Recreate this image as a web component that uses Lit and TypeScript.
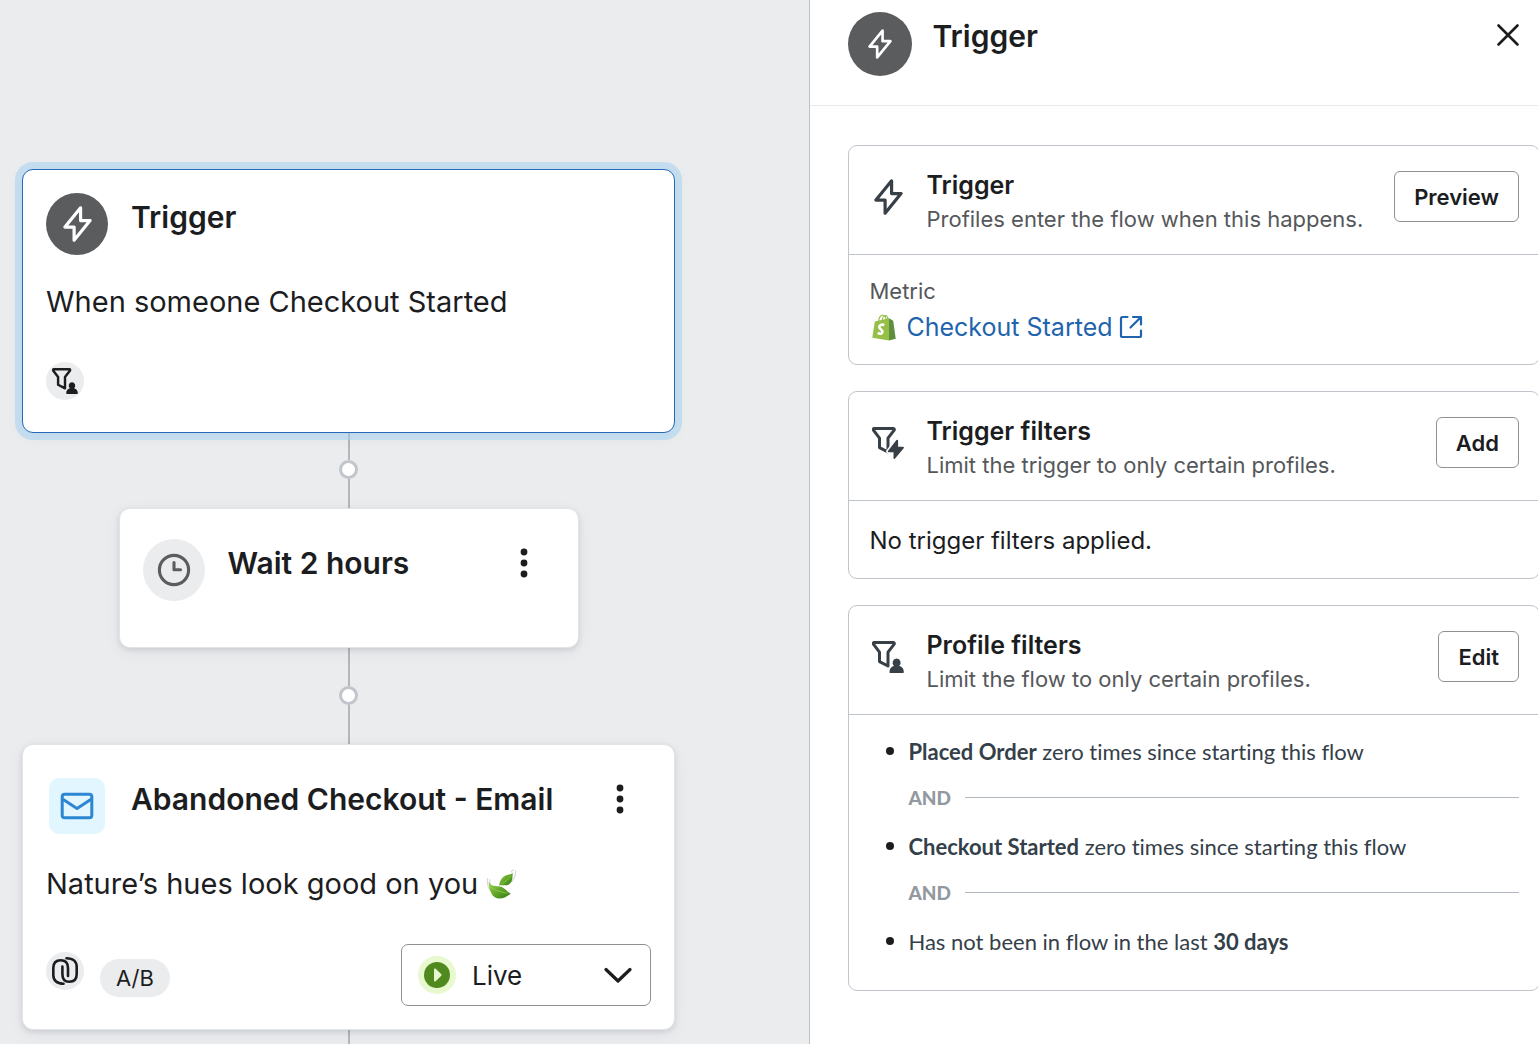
import { LitElement, html, css, svg, nothing, type TemplateResult } from 'lit';
import { customElement, property } from 'lit/decorators.js';

const bolt = html`<svg class="bolt" viewBox="0 0 28 35" fill="none" stroke="currentColor" stroke-width="3.1" stroke-linejoin="round" aria-hidden="true"><path d="M17 1.8 1.8 20.5h8.9v12.7L26.2 14.2H17Z"/></svg>`;

const funnelFrame = (mark: TemplateResult) => html`<svg class="funnel" viewBox="0 0 32 32" aria-hidden="true">
  <path d="M2.2 1.6H21.4C22.4 1.6 22.6 2.6 22 3.4L16 11.2V25L7.5 20.6V11.2L1.6 3.4C1 2.6 1.2 1.6 2.2 1.6Z" fill="none" stroke="currentColor" stroke-width="3" stroke-linejoin="round"/>
  ${mark}
</svg>`;

const funnelPerson = funnelFrame(svg`
  <path d="M24.6 17.6a4.1 4.1 0 0 0-2.6 7.2c-3 .9-4.5 3-4.5 6.2 0 .7.3 1 1 1h12.3c.7 0 1-.3 1-1 0-3.2-1.6-5.3-4.6-6.2a4.1 4.1 0 0 0-2.6-7.2Z" fill="currentColor" stroke="var(--icon-ground, #fff)" stroke-width="2.2" paint-order="stroke"/>`);

const funnelBolt = funnelFrame(svg`
  <path d="M25.2 13.6 16.8 24.4h5.6V31L31 20.6h-5.8Z" fill="currentColor" stroke="var(--icon-ground, #fff)" stroke-width="5" stroke-linejoin="round"/>
  <path d="M25.2 13.6 16.8 24.4h5.6V31L31 20.6h-5.8Z" fill="currentColor" stroke="currentColor" stroke-width="1.8" stroke-linejoin="round"/>`);

const clock = html`<svg width="34" height="34" viewBox="0 0 34 34" fill="none" stroke="currentColor" stroke-width="3.1" stroke-linecap="round" stroke-linejoin="round" aria-hidden="true"><circle cx="17" cy="17" r="14.6"/><path d="M17 9.5v7.3h6.5"/></svg>`;

const envelope = html`<svg width="34" height="28" viewBox="0 0 34 28" fill="none" stroke="currentColor" stroke-width="3" stroke-linejoin="round" aria-hidden="true"><rect x="2.2" y="2.2" width="29.6" height="23.6" rx="2.5"/><path d="m2.5 7 14.5 9.5L31.5 7"/></svg>`;

const loops = html`<svg width="26" height="28" viewBox="0 0 26 28" fill="none" stroke="currentColor" stroke-width="2.6" stroke-linecap="round" role="img" aria-label="Smart sending"><path d="M11.5 26.7C4.5 26.7 1.3 23 1.3 18V11C1.3 6 4 3.2 8.7 3.2S16 6 16 11v8"/><path d="M14.5 1.3C21.5 1.3 24.7 5 24.7 10v7c0 5-2.7 7.8-7.4 7.8S10.4 22 10.4 17V9.5"/></svg>`;

const kebab = html`<svg width="8" height="30" viewBox="0 0 8 30" fill="currentColor" aria-hidden="true"><circle cx="4" cy="4" r="3.4"/><circle cx="4" cy="15" r="3.4"/><circle cx="4" cy="26" r="3.4"/></svg>`;

const leaves = html`<svg class="leaves" viewBox="0 0 32 32" role="img" aria-label="Leaves fluttering in wind">
  <defs><linearGradient id="leaf" x1="0" y1="0" x2="1" y2="1"><stop offset="0" stop-color="#9fd84a"/><stop offset=".5" stop-color="#62a829"/><stop offset="1" stop-color="#357a12"/></linearGradient></defs>
  <g fill="none" stroke="#d6d8da" stroke-width="1.2" stroke-linecap="round"><path d="M1.5 10c-.5 5 .5 9 3 12.5"/><path d="M4 11c-.5 2 0 4 .5 5"/><path d="M30.5 2c.3 5-1 8-4 11"/><path d="M28.5 1c-1 .5-2 1-2.5 2"/></g>
  <path d="M2.6 13C3.5 24 7 30.5 13.5 30.5 19 30.4 22 28 25.5 25.5 21 23.3 19 17.8 12.5 17.8 8.5 17.8 5 17.5 2.6 13Z" fill="url(#leaf)"/>
  <path d="M27.8 3.5C26 6.5 19.5 5.5 16.5 9.5 14.5 12 14.2 14.5 13.6 16.8 18 16.2 22.5 18.5 25.5 14.3 28 10.7 27 7 27.8 3.5Z" fill="url(#leaf)"/>
  <path d="M4.5 18c5 4.5 11 6 18 7M26 7c-3 3-5 6-10 8.5" fill="none" stroke="#a9d96a" stroke-width=".6"/>
</svg>`;

const bag = html`<svg width="24" height="27" viewBox="0 0 24 27" aria-hidden="true">
  <path d="M6.5 7.5C7 3.5 9 1 11.3 1.2c2 .1 2.7 2.3 2.8 5M10 7C10.3 4 11.5 2 13.5 1.5c1.6 0 2.3 2 2.6 4" fill="none" stroke="#95bf47" stroke-width="1.2"/>
  <path d="M2.8 7.5 17 4.2V26.5L.3 23.7Z" fill="#95bf47"/>
  <path d="m17 4.2 4.2 2.5 2.5 18L17 26.5Z" fill="#5e8e3e"/>
  <path d="M12.3 11.2c-2.6-1.3-5-.2-5 1.9 0 2.3 3.3 2.4 3.2 4.7-.1 2-2.5 2.6-4.7.9" fill="none" stroke="#fff" stroke-width="2.6"/>
</svg>`;

const external = html`<svg width="24" height="24" viewBox="0 0 24 24" fill="none" stroke="currentColor" stroke-width="2.2" stroke-linecap="round" stroke-linejoin="round" aria-hidden="true"><path d="M8.5 2H3.5A1.5 1.5 0 0 0 2 3.5v17A1.5 1.5 0 0 0 3.5 22h17a1.5 1.5 0 0 0 1.5-1.5V15.5M14 2h8v7.5M21.5 2.5 11.5 12.5"/></svg>`;

const cross = html`<svg width="24" height="24" viewBox="0 0 24 24" fill="none" stroke="currentColor" stroke-width="2.6" stroke-linecap="round" aria-hidden="true"><path d="m2.5 2.5 19 19M21.5 2.5l-19 19"/></svg>`;

const reset = css`
  * { box-sizing: border-box; }
  h1, h2, h3, p, ul { margin: 0; padding: 0; }
  button { font: inherit; color: inherit; cursor: pointer; padding: 0; border: 0; background: none; }
  svg { display: block; flex: none; }
`;

/** A step of the flow: icon, title, optional overflow menu and body. */
@customElement('flow-node')
export class FlowNode extends LitElement {
  static styles = [reset, css`
    :host { display: block; width: 653px; position: relative; }
    :host([size='compact']) { width: 460px; }
    .card { background: #fff; border: 1px solid #e2e4e7; border-radius: 11px; padding: 30px 23px 23px; box-shadow: 0 2px 5px rgba(40, 50, 65, .12), 0 4px 16px rgba(40, 50, 65, .06); }
    .card.selected { border-color: #2569b8; padding: 23px 23px 32px; box-shadow: 0 0 0 7px rgba(159, 210, 242, .5), 0 2px 16px rgba(40, 50, 65, .08); }
    .card.compact { padding-bottom: 46px; }
    .head { display: flex; align-items: flex-start; height: 62px; }
    .icon { width: 62px; height: 62px; display: grid; place-items: center; border-radius: 50%; background: #ebecee; color: #5b5c5e; }
    .icon.dark { background: #5b5c5e; color: #fff; }
    .icon.mail { width: 56px; height: 56px; margin: 3px; border-radius: 10px; background: #e1f6ff; color: #2e86d3; }
    h2 { flex: 1; margin-left: 23px; font-size: 30px; line-height: 49px; font-weight: 600; white-space: nowrap; }
    .menu { width: 62px; height: 48px; display: grid; place-items: center; }
    .bolt { width: 29px; height: 36px; }
  `];
  @property() heading = '';
  @property() icon = '';
  @property({ type: Boolean }) selected = false;
  @property({ type: Boolean }) menu = false;
  @property({ reflect: true }) size = '';
  render() {
    const look = this.icon === 'bolt' ? 'dark' : this.icon === 'mail' ? 'mail' : '';
    const glyph = this.icon === 'bolt' ? bolt : this.icon === 'mail' ? envelope : clock;
    return html`<article class="card ${this.selected ? 'selected' : ''} ${this.size}">
      <div class="head">
        <span class="icon ${look}">${glyph}</span>
        <h2>${this.heading}</h2>
        ${this.menu ? html`<button class="menu" type="button" aria-label="Options for ${this.heading}">${kebab}</button>` : nothing}
      </div>
      <slot></slot>
    </article>`;
  }
}

/** A bordered section of the side panel with a header action. */
@customElement('detail-card')
export class DetailCard extends LitElement {
  static styles = [reset, css`
    :host { display: block; }
    .card { border: 1px solid #c0c5cb; border-radius: 9px; }
    .head { display: flex; gap: 20px; height: 109px; padding: 22px 20px 0 21px; border-bottom: 1px solid #c0c5cb; }
    .icon { width: 36px; height: 51px; margin-top: 3px; display: grid; place-items: center; color: #373f47; }
    .text { flex: 1; min-width: 0; white-space: nowrap; }
    h2 { font-size: 25px; line-height: 34px; font-weight: 600; color: #1c1d1f; }
    p { font-size: 22px; line-height: 34px; color: #55585b; }
    .action { height: 51px; margin-top: 3px; padding: 0 19px; border: 1px solid #8e9092; border-radius: 6px; font-size: 22px; font-weight: 600; }
    .bolt { width: 29px; height: 36px; }
    .funnel { width: 32px; height: 32px; }
  `];
  @property() heading = '';
  @property() note = '';
  @property() icon = '';
  @property() action = '';
  render() {
    return html`<section class="card">
      <header class="head">
        <span class="icon">${this.icon === 'bolt' ? bolt : this.icon === 'funnel-bolt' ? funnelBolt : funnelPerson}</span>
        <div class="text"><h2>${this.heading}</h2><p>${this.note}</p></div>
        <button class="action" type="button">${this.action}</button>
      </header>
      <slot></slot>
    </section>`;
  }
}

@customElement('app-root')
export class AppRoot extends LitElement {
  static styles = [reset, css`
    :host { display: grid; grid-template-columns: 10fr 9fr; min-height: 100vh; overflow: hidden; background: #ebecee; color: #1c1d1f; font-family: Inter, "Liberation Sans", sans-serif; }
    .canvas { display: flex; flex-direction: column; align-items: center; width: 653px; margin-left: 22px; padding-top: 169px; }
    .link { display: flex; flex-direction: column; align-items: center; }
    .link::before, .link::after { content: ''; width: 2px; background: #b4b6ba; }
    .link::before { height: 27px; }
    .link::after { height: 29px; }
    .link.long::before { height: 38px; }
    .link.long::after { height: 39px; }
    .stop { width: 19px; height: 19px; border: 3px solid #c1c6cc; border-radius: 50%; background: #fff; }
    .tail { flex: 1; width: 2px; min-height: 14px; background: #b4b6ba; }
    .copy { display: flex; align-items: center; gap: 8px; margin-top: 29px; font-size: 29px; line-height: 36px; white-space: nowrap; }
    .leaves { width: 31px; height: 31px; }
    .badge { display: grid; place-items: center; width: 38px; height: 38px; border-radius: 50%; background: #ebecee; --icon-ground: #ebecee; }
    .badge .funnel { width: 26px; height: 26px; }
    .solo { margin-top: 42px; }
    .foot { display: flex; align-items: flex-start; gap: 16px; margin-top: 42px; }
    .foot .badge { margin-top: 8px; }
    .pill { height: 38px; margin-top: 15px; padding: 0 16px; border-radius: 19px; background: #ebecee; font-size: 22px; line-height: 38px; }
    .status { position: relative; width: 250px; height: 62px; margin-left: auto; }
    .status select { appearance: none; width: 100%; height: 100%; padding: 0 60px 0 70px; border: 1px solid #8e9092; border-radius: 7px; background: #fff; color: inherit; font: 400 26px Inter, "Liberation Sans", sans-serif; }
    .live { position: absolute; left: 17px; top: 12px; pointer-events: none; }
    .caret { position: absolute; right: 19px; top: 23px; pointer-events: none; }

    .panel { min-width: 0; background: #fff; border-left: 1px solid #c0c3c6; }
    .top { display: flex; align-items: flex-start; height: 106px; padding: 12px 10px 0 38px; border-bottom: 1px solid #e8e9ea; }
    .avatar { display: grid; place-items: center; width: 64px; height: 64px; border-radius: 50%; background: #5b5c5e; color: #fff; }
    .avatar .bolt { width: 24px; height: 30px; }
    .top h1 { flex: 1; margin-left: 20px; font-size: 30px; line-height: 48px; font-weight: 600; }
    .close { display: grid; place-items: center; width: 40px; height: 46px; }
    .sections { display: flex; flex-direction: column; gap: 26px; margin-right: -2px; padding: 39px 0 39px 38px; }
    .metric { padding: 18px 20px 19px; }
    .label { font-size: 22px; line-height: 36px; color: #55585b; }
    .metric a { display: inline-flex; align-items: center; height: 36px; padding-left: 3px; font-size: 25px; color: #1f64ad; text-decoration: none; white-space: nowrap; }
    .metric a span { margin: 0 6px 0 10px; }
    .empty { padding: 22px 20px 19px; font-size: 24px; line-height: 36px; }
    .rules { padding: 11px 20px 24px; list-style: none; font-family: Lato, "Liberation Sans", sans-serif; font-size: 22px; font-variant-ligatures: none; color: #344049; }
    .rule { display: flex; align-items: center; gap: 14px; height: 50px; padding-left: 17px; white-space: nowrap; }
    .rule::before { content: ''; width: 8px; height: 8px; border-radius: 50%; background: #1c1d1f; }
    .rule b { font-weight: 700; }
    .and { display: flex; align-items: center; gap: 14px; height: 45px; padding: 0 0 2px 39px; font-size: 19px; font-weight: 900; color: #9299a1; }
    .and::after { content: ''; flex: 1; height: 1px; background: #b0b7bf; }
  `];

  render() {
    return html`
      <main class="canvas">
        <flow-node heading="Trigger" icon="bolt" selected>
          <p class="copy">When someone Checkout Started</p>
          <div class="badge solo">${funnelPerson}</div>
        </flow-node>
        <div class="link"><span class="stop"></span></div>
        <flow-node heading="Wait 2 hours" icon="clock" size="compact" menu></flow-node>
        <div class="link long"><span class="stop"></span></div>
        <flow-node heading="Abandoned Checkout - Email" icon="mail" menu>
          <p class="copy">Nature’s hues look good on you ${leaves}</p>
          <div class="foot">
            <span class="badge">${loops}</span>
            <span class="pill">A/B</span>
            <div class="status">
              <select aria-label="Status"><option>Live</option></select>
              <svg class="live" width="38" height="38" viewBox="0 0 38 38" aria-hidden="true"><circle cx="19" cy="19" r="19" fill="#e8f8cf"/><circle cx="19" cy="19" r="13" fill="#508a1e"/><path d="M17 13.5 22.6 19 17 24.5Z" fill="#e8f8cf" stroke="#e8f8cf" stroke-width="2" stroke-linejoin="round"/></svg>
              <svg class="caret" width="28" height="17" viewBox="0 0 28 17" fill="none" stroke="currentColor" stroke-width="3.2" stroke-linecap="round" stroke-linejoin="round" aria-hidden="true"><path d="m2 2.5 12 11.5L26 2.5"/></svg>
            </div>
          </div>
        </flow-node>
        <div class="tail"></div>
      </main>
      <aside class="panel">
        <header class="top">
          <span class="avatar">${bolt}</span>
          <h1>Trigger</h1>
          <button class="close" type="button" aria-label="Close">${cross}</button>
        </header>
        <div class="sections">
          <detail-card heading="Trigger" note="Profiles enter the flow when this happens." icon="bolt" action="Preview">
            <div class="metric">
              <p class="label">Metric</p>
              <a href="#checkout-started">${bag}<span>Checkout Started</span>${external}</a>
            </div>
          </detail-card>
          <detail-card heading="Trigger filters" note="Limit the trigger to only certain profiles." icon="funnel-bolt" action="Add">
            <p class="empty">No trigger filters applied.</p>
          </detail-card>
          <detail-card heading="Profile filters" note="Limit the flow to only certain profiles." icon="funnel-person" action="Edit">
            <ul class="rules">
              <li class="rule"><span><b>Placed Order</b> zero times since starting this flow</span></li>
              <li class="and">AND</li>
              <li class="rule"><span><b>Checkout Started</b> zero times since starting this flow</span></li>
              <li class="and">AND</li>
              <li class="rule"><span>Has not been in flow in the last <b>30 days</b></span></li>
            </ul>
          </detail-card>
        </div>
      </aside>`;
  }
}
